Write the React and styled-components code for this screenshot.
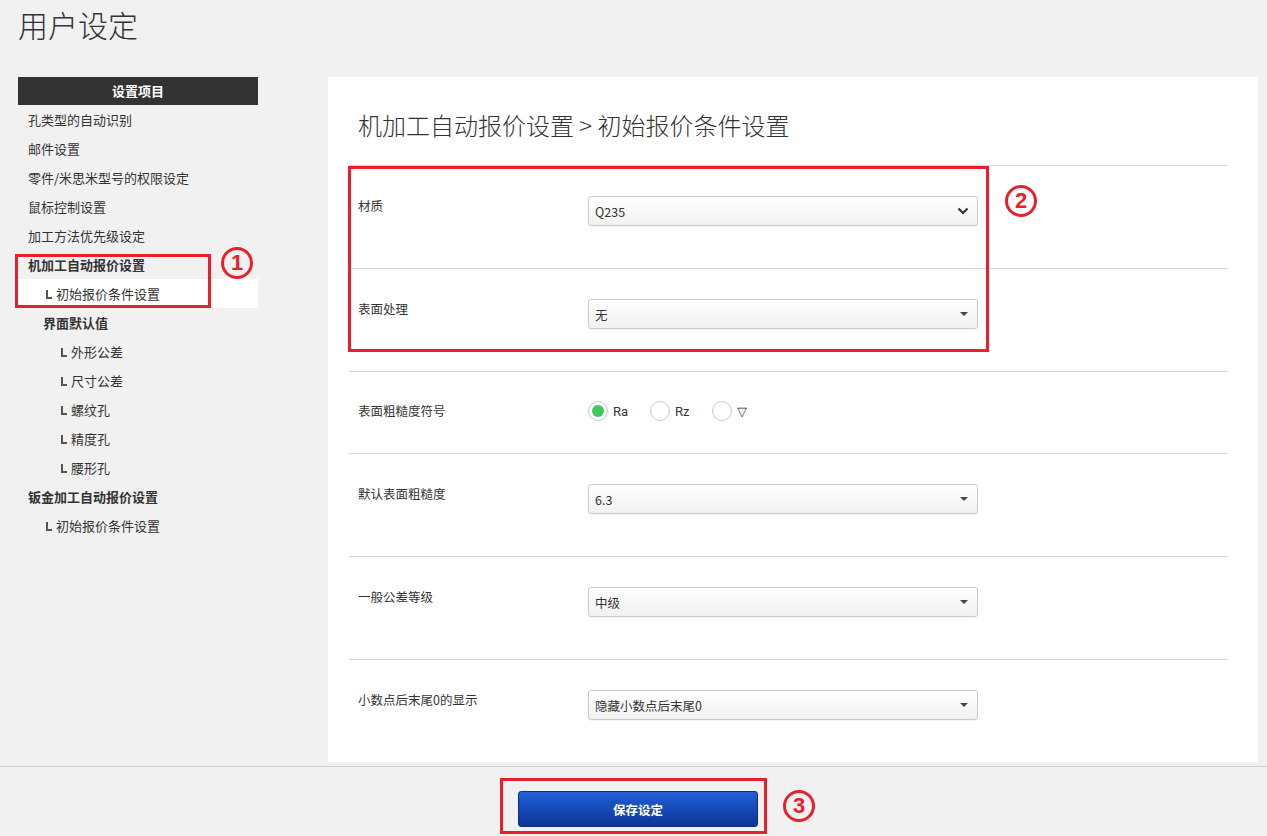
import styled, { createGlobalStyle } from "styled-components";

const GlobalStyle = createGlobalStyle`
  html, body {
    margin: 0;
    padding: 0;
    background: #f1f1f1;
  }
  body {
    font-family: "Noto Sans CJK SC", "Noto Sans", "Liberation Sans", sans-serif;
    color: #333;
  }
`;

const Page = styled.div`
  display: flex;
  flex-direction: column;
  height: 836px;
  overflow: hidden;
`;

const PageTitle = styled.h1`
  margin: 0 0 33px;
  padding: 4px 0 0 18px;
  font-size: 30px;
  line-height: 40px;
  font-weight: 300;
  color: #333;
`;

const Body = styled.div`
  display: flex;
  flex: 1;
  padding-left: 18px;
  min-height: 0;
`;

/* 左侧菜单 */
const Sidebar = styled.nav`
  width: 240px;
  flex-shrink: 0;
  position: relative;
`;

const SideHeader = styled.div`
  height: 28px;
  line-height: 28px;
  background: #333;
  color: #fff;
  font-size: 13px;
  font-weight: 700;
  text-align: center;
`;

const SideItem = styled.div`
  height: 29px;
  line-height: 29px;
  font-size: 13px;
  padding-left: ${(p) => p.$indent}px;
  font-weight: ${(p) => (p.$bold ? 700 : 400)};
  background: ${(p) => (p.$active ? "#fff" : "transparent")};
  color: #333;
  white-space: nowrap;
`;

const Corner = styled.span`
  display: inline-block;
  width: 4px;
  height: 7px;
  border-left: 2px solid #555;
  border-bottom: 2px solid #555;
  margin-right: 4px;
  vertical-align: 0;
`;

/* 主面板 */
const Panel = styled.main`
  margin-left: 70px;
  width: 930px;
  height: 685px;
  background: #fff;
  padding: 0 30px 0 21px;
  box-sizing: border-box;
`;

const PanelTitle = styled.h2`
  margin: 0 0 25px;
  padding: 33px 0 0 9px;
  font-size: 24px;
  line-height: 30px;
  font-weight: 300;
  color: #333;
`;

const Group = styled.div`
  position: relative;
`;

const Row = styled.div`
  display: grid;
  grid-template-columns: 239px 390px;
  align-items: start;
  border-top: 1px solid #d6d6d6;
  padding: ${(p) => (p.$radio ? "29px 0 32px" : "30px 0 42px")};
`;

const Label = styled.div`
  padding-left: 9px;
  font-size: 12.5px;
  line-height: 20px;
  color: #333;
`;

const SelectBox = styled.div`
  display: flex;
  align-items: center;
  justify-content: space-between;
  height: 30px;
  box-sizing: border-box;
  padding: 0 8px 0 6px;
  border: 1px solid #cacaca;
  border-radius: 3px;
  background: linear-gradient(#ffffff, #f1f1f1);
  font-size: 12.5px;
  color: #333;
  box-shadow: 0 1px 1px rgba(0, 0, 0, 0.04);
`;

const Caret = styled.span`
  width: 0;
  height: 0;
  border-left: 4px solid transparent;
  border-right: 4px solid transparent;
  border-top: 4px solid #444;
  margin-right: 1px;
`;

const RadioGroup = styled.div`
  display: flex;
  align-items: center;
`;

const RadioItem = styled.label`
  display: flex;
  align-items: center;
  gap: 5px;
  margin-right: 22px;
  font-size: 13px;
  font-family: "Roboto", "Noto Sans", sans-serif;
  color: #333;
`;

const RadioDot = styled.span`
  width: 20px;
  height: 20px;
  box-sizing: border-box;
  border: 1px solid #c9c9c9;
  border-radius: 50%;
  display: flex;
  align-items: center;
  justify-content: center;
  background: #fff;
  &::after {
    content: "";
    width: 12px;
    height: 12px;
    border-radius: 50%;
    background: ${(p) => (p.$checked ? "#3fc95a" : "transparent")};
  }
`;

/* 底部 */
const Footer = styled.footer`
  height: 70px;
  flex-shrink: 0;
  border-top: 1px solid #cfcfcf;
  display: flex;
  justify-content: center;
  padding: 24px 0 0 9px;
  box-sizing: border-box;
`;

const ButtonWrap = styled.div`
  position: relative;
`;

const SaveButton = styled.button`
  width: 240px;
  height: 36px;
  border: 1px solid #0a2f8a;
  border-radius: 3px;
  background: linear-gradient(#2160d8, #0a3597);
  color: #fff;
  font-family: inherit;
  font-size: 12.5px;
  font-weight: 700;
`;

/* 标注 */
const RedBox = styled.div`
  position: absolute;
  border: 3px solid #e8202b;
  pointer-events: none;
`;

const Badge = styled.div`
  position: absolute;
  width: 32px;
  height: 32px;
  box-sizing: border-box;
  border: 3px solid #e8202b;
  border-radius: 50%;
  color: #e8202b;
  font-family: "Liberation Sans", sans-serif;
  font-weight: 700;
  font-size: 22px;
  line-height: 26px;
  text-align: center;
`;

const menu = [
  { text: "孔类型的自动识别", indent: 10 },
  { text: "邮件设置", indent: 10 },
  { text: "零件/米思米型号的权限设定", indent: 10 },
  { text: "鼠标控制设置", indent: 10 },
  { text: "加工方法优先级设定", indent: 10 },
  { text: "机加工自动报价设置", indent: 10, bold: true },
  { text: "初始报价条件设置", indent: 28, sub: true, active: true },
  { text: "界面默认值", indent: 25, bold: true },
  { text: "外形公差", indent: 43, sub: true },
  { text: "尺寸公差", indent: 43, sub: true },
  { text: "螺纹孔", indent: 43, sub: true },
  { text: "精度孔", indent: 43, sub: true },
  { text: "腰形孔", indent: 43, sub: true },
  { text: "钣金加工自动报价设置", indent: 10, bold: true },
  { text: "初始报价条件设置", indent: 28, sub: true },
];

const Chevron = () => (
  <svg width="12" height="8" viewBox="0 0 12 8">
    <path d="M1.5 1.5 L6 6 L10.5 1.5" fill="none" stroke="#333" strokeWidth="2.2" />
  </svg>
);

const Select = ({ value, native }) => (
  <SelectBox>
    <span>{value}</span>
    {native ? <Chevron /> : <Caret />}
  </SelectBox>
);

const App = () => {
  return (
    <Page>
      <GlobalStyle />
      <PageTitle>用户设定</PageTitle>
      <Body>
        <Sidebar>
          <SideHeader>设置项目</SideHeader>
          {menu.map((m, i) => (
            <SideItem key={i} $indent={m.indent} $bold={m.bold} $active={m.active}>
              {m.sub && <Corner />}
              {m.text}
            </SideItem>
          ))}
          <RedBox style={{ left: -3, top: 177, width: 190, height: 48 }} />
          <Badge style={{ left: 203, top: 170 }}>1</Badge>
        </Sidebar>
        <Panel>
          <PanelTitle>机加工自动报价设置 &gt; 初始报价条件设置</PanelTitle>
          <Group>
            <Row>
              <Label>材质</Label>
              <Select value="Q235" native />
            </Row>
            <Row>
              <Label>表面处理</Label>
              <Select value="无" />
            </Row>
            <RedBox style={{ left: -1, top: 1, width: 635, height: 180 }} />
            <Badge style={{ left: 656, top: 20 }}>2</Badge>
          </Group>
          <Row $radio>
            <Label>表面粗糙度符号</Label>
            <RadioGroup>
              <RadioItem>
                <RadioDot $checked />
                Ra
              </RadioItem>
              <RadioItem>
                <RadioDot />
                Rz
              </RadioItem>
              <RadioItem>
                <RadioDot />▽
              </RadioItem>
            </RadioGroup>
          </Row>
          <Row>
            <Label>默认表面粗糙度</Label>
            <Select value="6.3" />
          </Row>
          <Row>
            <Label>一般公差等级</Label>
            <Select value="中级" />
          </Row>
          <Row>
            <Label>小数点后末尾0的显示</Label>
            <Select value="隐藏小数点后末尾0" />
          </Row>
        </Panel>
      </Body>
      <Footer>
        <ButtonWrap>
          <SaveButton>保存设定</SaveButton>
          <RedBox style={{ left: -18, top: -13, width: 261, height: 50 }} />
          <Badge style={{ left: 265, top: -1 }}>3</Badge>
        </ButtonWrap>
      </Footer>
    </Page>
  );
};

export default App;
